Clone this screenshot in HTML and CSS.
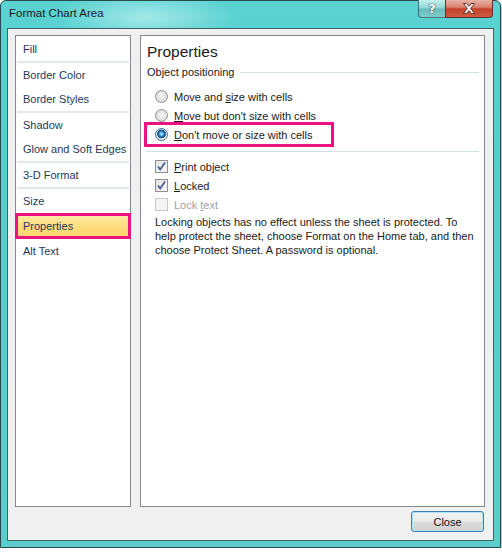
FILE: index.html
```html
<!DOCTYPE html>
<html lang="en">
<head>
<meta charset="utf-8">
<title>Format Chart Area</title>
<link rel="stylesheet" href="styles.css">
</head>
<body>
<div class="window">
  <div class="titlebar">
    <span class="title">Format Chart Area</span>
    <div class="caption-buttons">
      <div class="cbtn help">?</div>
      <div class="cbtn close">
        <svg width="14" height="11" viewBox="0 0 14 11"><path d="M1.5 0.5h3.2l2.3 2.8 2.3-2.8h3.2l-3.8 4.9 3.8 5h-3.2l-2.3-2.9-2.3 2.9h-3.2l3.8-5z" fill="#fff" stroke="#5a2a22" stroke-width="0.9" stroke-linejoin="round"/></svg>
      </div>
    </div>
  </div>
  <div class="client">
    <div class="panels">
      <ul class="nav">
        <li class="item">Fill</li>
        <li class="sep"></li>
        <li class="item">Border Color</li>
        <li class="item">Border Styles</li>
        <li class="sep"></li>
        <li class="item">Shadow</li>
        <li class="item">Glow and Soft Edges</li>
        <li class="sep"></li>
        <li class="item">3-D Format</li>
        <li class="sep"></li>
        <li class="item">Size</li>
        <li class="item active">Properties</li>
        <li class="item">Alt Text</li>
      </ul>
      <div class="content">
        <h1 class="heading">Properties</h1>
        <div class="group-head"><span>Object positioning</span><span class="rule"></span></div>
        <div class="options">
          <div class="opt"><span class="radio"></span><span>Move and <u>s</u>ize with cells</span></div>
          <div class="opt"><span class="radio"></span><span><u>M</u>ove but don't size with cells</span></div>
          <div class="opt hl"><span class="radio checked"></span><span><u>D</u>on't move or size with cells</span></div>
        </div>
        <div class="divider"></div>
        <div class="checks">
          <div class="opt"><span class="check on"><svg width="11" height="11" viewBox="0 0 11 11"><path d="M2 5.5l2.2 3 4.8-7" fill="none" stroke="#4b5d96" stroke-width="1.8"/></svg></span><span><u>P</u>rint object</span></div>
          <div class="opt"><span class="check on"><svg width="11" height="11" viewBox="0 0 11 11"><path d="M2 5.5l2.2 3 4.8-7" fill="none" stroke="#4b5d96" stroke-width="1.8"/></svg></span><span><u>L</u>ocked</span></div>
          <div class="opt disabled"><span class="check"></span><span>Lock <u>t</u>ext</span></div>
        </div>
        <p class="note">Locking objects has no effect unless the sheet is protected. To<br>help protect the sheet, choose Format on the Home tab, and then<br>choose Protect Sheet. A password is optional.</p>
      </div>
    </div>
    <div class="footer">
      <button class="btn" type="button">Close</button>
    </div>
  </div>
</div>
</body>
</html>
```
FILE: styles.css
```css
* { box-sizing: border-box; }
html, body { margin: 0; padding: 0; }
body {
  background: #ffffff;
  font-family: "Liberation Sans", Arial, sans-serif;
  font-size: 11px;
  color: #1a1a1a;
}
.window {
  width: 501px;
  height: 548px;
  border: 1px solid #27494b;
  border-radius: 6px 6px 0 0;
  padding: 0 6px 6px 6px;
  display: flex;
  flex-direction: column;
  background:
    radial-gradient(ellipse 90px 26px at 145px 16px, rgba(170, 236, 234, 0.9), rgba(170, 236, 234, 0)),
    linear-gradient(#5bd2d2, #56cdcd 30%, #5ccccc 100%);
  box-shadow: 1px 2px 3px rgba(0, 0, 0, 0.35);
}
.titlebar {
  height: 27px;
  display: flex;
  justify-content: space-between;
  align-items: flex-start;
}
.title {
  padding-left: 2px;
  line-height: 24px;
  font-size: 11.5px;
  color: #1b1b1b;
}
.caption-buttons {
  display: flex;
  margin-right: 1px;
  margin-top: -1px;
}
.cbtn {
  height: 18px;
  display: flex;
  align-items: center;
  justify-content: center;
}
.help {
  width: 27px;
  border: 1px solid rgba(38, 80, 82, 0.75);
  border-top: none;
  border-right: none;
  border-radius: 0 0 0 4px;
  background: linear-gradient(#c6eeee, #96d6d6 45%, #6bbcbc 52%, #7fcaca);
  color: #ffffff;
  font-weight: bold;
  font-size: 13px;
  font-family: "DejaVu Sans", sans-serif;
  text-shadow: 0 0 1px #2c4b4c, 0 0 1px #2c4b4c, 0 0 1px #2c4b4c;
}
.close {
  width: 48px;
  border: 1px solid #62302a;
  border-top: none;
  border-radius: 0 0 4px 0;
  background: linear-gradient(#e9b1a6, #d88470 42%, #c4432d 52%, #cf5b41);
}
.client {
  flex: 1;
  background: #f0f0f0;
  border: 1px solid #3d6465;
  padding: 6px 8px 8px 7px;
  display: flex;
  flex-direction: column;
}
.panels {
  display: flex;
  gap: 9px;
  height: 472px;
}
.nav {
  width: 116px;
  margin: 0;
  padding: 1px 0 0 0;
  list-style: none;
  background: #ffffff;
  border: 1px solid #828790;
}
.item {
  height: 24px;
  line-height: 24px;
  padding-left: 7px;
  color: #1e395b;
  white-space: nowrap;
}
.sep {
  height: 2px;
  margin: 0 1px;
  background: #e4e7ed;
}
.item.active {
  height: 26px;
  line-height: 20px;
  margin: 0 -1px;
  padding-left: 5px;
  border: 3px solid #ec1380;
  background: linear-gradient(#fee9a3, #fddc7c 55%, #fcd56c);
}
.content {
  flex: 1;
  background: #ffffff;
  border: 1px solid #828790;
  padding: 0 5px 0 6px;
}
.heading {
  margin: 6px 0 0 0;
  font-size: 15.5px;
  font-weight: normal;
  line-height: 20px;
  color: #1a1a1a;
}
.group-head {
  margin-top: 1px;
  height: 18px;
  display: flex;
  align-items: center;
}
.rule {
  flex: 1;
  height: 1px;
  margin-left: 6px;
  background: #d5dfe5;
}
.options {
  margin-top: 6px;
}
.opt {
  height: 19px;
  display: flex;
  align-items: center;
  padding-left: 8px;
  white-space: nowrap;
}
.opt.hl {
  width: 184px;
  outline: 3px solid #ec1380;
}
.radio {
  width: 13px;
  height: 13px;
  margin-right: 6px;
  border-radius: 50%;
  border: 1px solid #8e8f8f;
  background: radial-gradient(circle at 50% 45%, #f4f4f4 0%, #e6e6e6 45%, #cfcfcf 100%);
  flex: none;
}
.radio.checked {
  border-color: #3b6d9a;
  background: radial-gradient(circle at 50% 45%, #c9f0ff 0%, #4fb0e8 22%, #1c5d95 40%, #0f3e6b 48%, #eaf4fb 58%, #d6e6f2 100%);
}
.divider {
  height: 1px;
  margin: 7px 0 0 -1px;
  background: #d5dfe5;
}
.checks {
  margin-top: 5px;
}
.check {
  width: 13px;
  height: 13px;
  margin-right: 6px;
  border: 1px solid #8f8f8f;
  background: linear-gradient(135deg, #e3e3e3, #f8f8f8);
  display: flex;
  align-items: center;
  justify-content: center;
  flex: none;
}
.opt.disabled {
  color: #a2a2a2;
}
.opt.disabled .check {
  border-color: #c9c9c9;
  background: #f4f4f4;
}
u {
  text-decoration: underline;
  text-underline-offset: 1px;
}
.note {
  margin: 1px 0 0 0;
  padding-left: 8px;
  line-height: 14px;
  white-space: nowrap;
}
.footer {
  margin-top: 4px;
  display: flex;
  justify-content: flex-end;
}
.btn {
  width: 73px;
  height: 21px;
  margin-right: 1px;
  padding: 0;
  font-family: "Liberation Sans", Arial, sans-serif;
  font-size: 11px;
  color: #111111;
  border: 1px solid #3c7fb1;
  border-radius: 3px;
  background: linear-gradient(#f2f2f2, #ebebeb 48%, #dddddd 52%, #cfcfcf);
  box-shadow: inset 0 0 0 1px #b4e3f7;
}
```
